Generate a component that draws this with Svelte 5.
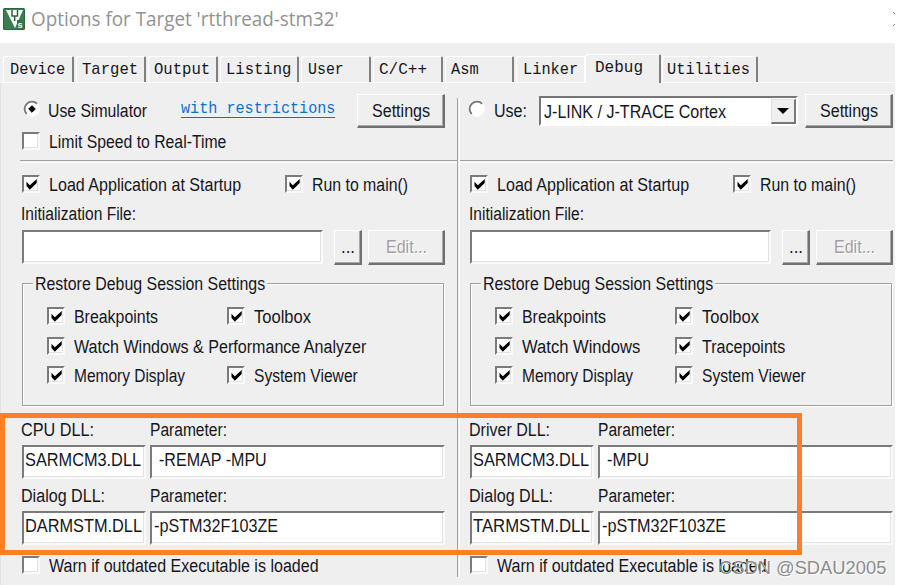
<script>
	const tabs = [
		{ name: 'Device', left: 3, text: 6, size: 55, width: 71 },
		{ name: 'Target', left: 2, text: 5, size: 56, width: 70 },
		{ name: 'Output', left: 2, text: 5, size: 56, width: 70 },
		{ name: 'Listing', left: 2, text: 5, size: 65, width: 79 },
		{ name: 'User', left: 2, text: 6, size: 36, width: 70 },
		{ name: 'C/C++', left: 2, text: 5, size: 48, width: 70 },
		{ name: 'Asm', left: 2, text: 5, size: 28, width: 69 },
		{ name: 'Linker', left: 2, text: 6, size: 55, width: 69, flat: true },
		{ name: 'Debug', left: 0, text: 9, size: 48, width: 76, active: true },
		{ name: 'Utilities', left: 1, text: 4, size: 83, width: 96 },
	]

	const columns = [
		{
			simulator: true,
			options: [
				['Breakpoints', 84, 'Toolbox', 57],
				['Watch Windows & Performance Analyzer', 292],
				['Memory Display', 111, 'System Viewer', 104],
			],
			dlls: [
				['CPU DLL:', 73, 'SARMCM3.DLL', 116, '-REMAP -MPU', 108, 8],
				['Dialog DLL:', 84, 'DARMSTM.DLL', 117, '-pSTM32F103ZE', 124, 3],
			],
		},
		{
			simulator: false,
			options: [
				['Breakpoints', 84, 'Toolbox', 57],
				['Watch Windows', 118, 'Tracepoints', 83],
				['Memory Display', 111, 'System Viewer', 104],
			],
			dlls: [
				['Driver DLL:', 81, 'SARMCM3.DLL', 116, '-MPU', 42, 8],
				['Dialog DLL:', 84, 'TARMSTM.DLL', 117, '-pSTM32F103ZE', 124, 3],
			],
		},
	]

	// squeeze a caption to the width of the dialog font
	const fit = (node, width) => {
		node.style.transform = `scaleX(${width / node.offsetWidth})`
	}
</script>

{#snippet caption(text, width)}
	<span class="caption" style="width: {width}px"><span use:fit={width}>{text}</span></span>
{/snippet}

{#snippet box(checked)}
	<span class="box">
		{#if checked}
			<svg viewBox="0 0 18 18" width="18" height="18">
				<path d="M4.5 6.7v4.3l3.3 3.7L14.7 8V4L7.8 10.3z" />
			</svg>
		{/if}
	</span>
{/snippet}

{#snippet check(text, width, checked = true)}
	<div class="check">
		{@render box(checked)}
		{@render caption(text, width)}
	</div>
{/snippet}

<main>
	<header>
		<svg class="logo" viewBox="0 0 22 22" width="22" height="22">
			<rect width="22" height="22" rx="1.5" fill="#2b6940" />
			<rect x="1" y="1" width="20" height="20" rx="1" fill="#3c7e50" />
			<path d="M3 2h17L12 20z" fill="#fff" />
			<path d="M9 2v6h5.500V2M11.700 8v5" fill="none" stroke="#28693f" stroke-width="1.5" />
			<path d="M14 12h6.500v9H14z" fill="#337449" />
			<text x="14.500" y="19.500">s</text>
		</svg>
		<div class="title">{@render caption("Options for Target 'rtthread-stm32'", 308)}</div>
		<svg class="close" viewBox="0 0 3 18" width="3" height="18">
			<path d="M1 2l3 3M1 16l3-3" />
		</svg>
	</header>

	<nav>
		{#each tabs as tab}
			<div
				class="tab"
				class:active={tab.active}
				class:flat={tab.flat}
				style="width: {tab.width}px; margin-left: {tab.left}px; padding-left: {tab.text}px"
			>
				{@render caption(tab.name, tab.size)}
			</div>
		{/each}
	</nav>

	<div class="page">
		{#each columns as column}
			<section class:right={!column.simulator}>
				<div class="target">
					<svg class="radio" viewBox="0 0 18 18" width="18" height="18">
						<circle cx="9" cy="9" r="7.3" fill="#fff" />
						<path d="M3.8 14.2A7.3 7.3 0 0 1 14.2 3.8" stroke="#777" />
						<path d="M14.2 3.8A7.3 7.3 0 0 1 3.8 14.2" stroke="#fafafa" />
						{#if column.simulator}
							<path d="M9 5.7L12.3 9 9 12.3 5.7 9z" fill="#000" stroke="#000" stroke-width="1" />
						{/if}
					</svg>
					{#if column.simulator}
						{@render caption('Use Simulator', 99)}
						<a href="#restrictions">{@render caption('with restrictions', 154)}</a>
					{:else}
						{@render caption('Use:', 33)}
						<div class="select">
							{@render caption('J-LINK / J-TRACE Cortex', 182)}
							<span class="arrow"><i></i></span>
						</div>
					{/if}
					<div class="button settings">{@render caption('Settings', 58)}</div>
				</div>
				<div class="limit">
					{#if column.simulator}
						{@render check('Limit Speed to Real-Time', 177, false)}
					{/if}
				</div>
				<hr />
				<div class="startup">
					{@render check('Load Application at Startup', 192)}
					{@render check('Run to main()', 96)}
				</div>
				<div class="label init">{@render caption('Initialization File:', 115)}</div>
				<div class="file">
					<div class="field"></div>
					<div class="button browse">{@render caption('...', 14)}</div>
					<div class="button edit">{@render caption('Edit...', 41)}</div>
				</div>
				<div class="group">
					<div class="legend">{@render caption('Restore Debug Session Settings', 230)}</div>
					{#each column.options as [first, firstWidth, second, secondWidth]}
						<div class="options">
							{@render check(first, firstWidth)}
							{#if second}
								{@render check(second, secondWidth)}
							{/if}
						</div>
					{/each}
				</div>
				{#each column.dlls as [name, nameWidth, dll, dllWidth, param, paramWidth, indent]}
					<div class="label pair">
						{@render caption(name, nameWidth)}
						{@render caption('Parameter:', 77)}
					</div>
					<div class="pair">
						<div class="field">{@render caption(dll, dllWidth)}</div>
						<div class="field" style="padding-left: {indent - 1}px">
							{@render caption(param, paramWidth)}
						</div>
					</div>
				{/each}
				<div class="warn">
					{@render check('Warn if outdated Executable is loaded', 270, false)}
				</div>
			</section>
		{/each}
	</div>

	<div class="highlight"></div>
	<div class="watermark">{@render caption('CSDN @SDAU2005', 167)}</div>
</main>

<style>
	:global(body) {
		margin: 0;
		background: #fff;
	}
	main {
		position: relative;
		box-sizing: border-box;
		width: 901px;
		height: 585px;
		padding-right: 6px;
		overflow: hidden;
		font: 18px/22px 'Liberation Sans', sans-serif;
		color: #16161e;
	}
	.caption {
		display: inline-block;
		flex: none;
		white-space: nowrap;
	}
	.caption span {
		display: inline-block;
		transform-origin: left;
	}
	header {
		display: flex;
		height: 43px;
	}
	.logo {
		margin: 8px 0 0 3px;
	}
	.logo text {
		font: bold 9px 'Liberation Sans', sans-serif;
		fill: #fff;
	}
	.title {
		margin: 7px 0 0 6px;
		font: 20px/24px 'Open Sans', 'Noto Sans', sans-serif;
		color: #929292;
	}
	.close {
		margin: 10px 0 0 auto;
		fill: none;
		stroke: #888;
	}
	nav {
		display: flex;
		align-items: flex-end;
		height: 39px;
		background: #efefef;
		font: 17px/22px 'Liberation Mono', monospace;
	}
	.tab {
		box-sizing: border-box;
		flex: none;
		height: 26px;
		padding-top: 2px;
		border-top: 1px solid #fff;
		border-left: 1px solid #fff;
		border-right: 2px solid #808080;
		border-radius: 3px 2px 0 0;
	}
	.tab.flat {
		border-right: 1px solid #fff;
	}
	.tab.active {
		position: relative;
		height: 29px;
		margin-bottom: -1px;
		background: #efefef;
	}
	.page {
		box-sizing: border-box;
		display: flex;
		height: 503px;
		padding: 9px 0 0 20px;
		border-top: 1px solid #fff;
		border-left: 1px solid #e3e3e3;
		background: #efefef;
	}
	section {
		position: relative;
		width: 423px;
		margin-left: 1px;
		padding-right: 12px;
	}
	section.right {
		margin: 0;
		padding: 0 0 0 13px;
	}
	section.right::before {
		content: '';
		position: absolute;
		left: 0;
		top: 6px;
		width: 1px;
		height: 479px;
		border-left: 1px solid #a0a0a0;
		border-right: 1px solid #fff;
	}
	.target {
		display: flex;
		height: 36px;
		padding-top: 2px;
	}
	.radio {
		flex: none;
		margin: 6px 7px 0 1px;
		fill: none;
		stroke-width: 1.8;
	}
	.right .radio {
		margin: 6px 8px 0 -2px;
	}
	.target > .caption {
		margin-top: 6px;
	}
	a {
		height: 19px;
		margin: 4px 0 0 34px;
		border-bottom: 1px solid #0d72ce;
		font: 17px/22px 'Liberation Mono', monospace;
		color: #0d72ce;
		text-decoration: none;
	}
	.button {
		box-sizing: border-box;
		flex: none;
		display: flex;
		align-items: center;
		justify-content: center;
		border: 1px solid #fff;
		border-right: 2px solid #707070;
		border-bottom: 2px solid #707070;
		box-shadow: inset -1px -1px #a8a8a8;
	}
	.settings {
		width: 88px;
		height: 34px;
		margin-left: auto;
	}
	.select {
		box-sizing: border-box;
		display: flex;
		width: 259px;
		height: 30px;
		margin: 2px 0 0 12px;
		padding: 3px 0 0 3px;
		border: 2px solid #777;
		border-right-color: #fff;
		border-bottom-color: #fff;
		background: #fff;
	}
	.arrow {
		box-sizing: border-box;
		display: flex;
		align-items: center;
		justify-content: center;
		width: 25px;
		height: 25px;
		margin: -2px 0 0 auto;
		border: 1px solid #e3e3e3;
		border-right: 2px solid #777;
		border-bottom: 2px solid #777;
		background: #efefef;
	}
	.arrow i {
		border: 6px solid transparent;
		border-top-color: #000;
		border-bottom: 0;
	}
	.limit {
		height: 21px;
		margin-top: 2px;
	}
	.check {
		display: flex;
	}
	.check .caption {
		margin-top: -1px;
	}
	.box {
		box-sizing: border-box;
		flex: none;
		width: 18px;
		height: 18px;
		margin-right: 9px;
		border: 2px solid #7b7b7b;
		border-right-color: #fafafa;
		border-bottom-color: #fafafa;
		background: #fff;
		box-shadow: inset -1px -1px #e3e3e3;
	}
	.box svg {
		display: block;
		margin: -2px;
	}
	hr {
		height: 1px;
		margin: 7px -12px 0 -2px;
		border: 0;
		border-top: 1px solid #a0a0a0;
		border-bottom: 1px solid #fff;
	}
	.right hr {
		margin: 7px 0 0 -11px;
	}
	.startup {
		display: grid;
		grid-template-columns: 263px auto;
		height: 22px;
		margin-top: 12px;
	}
	.init {
		margin: 6px 0 4px -1px;
		height: 23px;
	}
	.file {
		display: flex;
		height: 35px;
	}
	.field {
		box-sizing: border-box;
		height: 34px;
		padding: 2px 0 0 1px;
		border: 2px solid #7b7b7b;
		border-right-color: #fafafa;
		border-bottom-color: #fafafa;
		background: #fff;
		box-shadow: inset -1px -1px #e3e3e3;
	}
	.file .field {
		width: 301px;
		margin-right: 11px;
	}
	.browse {
		width: 28px;
		margin-right: 6px;
	}
	.edit {
		width: 77px;
		color: #a0a0a0;
		text-shadow: 1px 1px #fff;
	}
	.group {
		box-sizing: border-box;
		width: 422px;
		height: 123px;
		margin: 18px 0 13px;
		border: 1px solid #a0a0a0;
		box-shadow: 1px 1px #fff, inset 1px 1px #fff;
	}
	.legend {
		width: 230px;
		height: 22px;
		margin: -11px 0 12px 10px;
		padding: 0 2px;
		background: #efefef;
	}
	.options {
		display: grid;
		grid-template-columns: 180px auto;
		height: 22px;
		margin: 0 0 7.5px 24px;
	}
	.pair {
		display: grid;
		grid-template-columns: 124px 295px;
		gap: 4px;
		height: 34px;
	}
	.label.pair {
		gap: 5px;
		height: 22px;
		margin: 0 0 4px -1px;
	}
	.pair + .label.pair {
		margin-top: 6px;
	}
	.warn {
		margin-top: 11px;
	}
	.highlight {
		position: absolute;
		left: 0;
		top: 413px;
		width: 792px;
		height: 132px;
		border: 5px solid #ff7f27;
	}
	.watermark {
		position: absolute;
		left: 719px;
		top: 557px;
		color: #8c8c8c;
		text-shadow: 1px 1px #fff;
	}
</style>
